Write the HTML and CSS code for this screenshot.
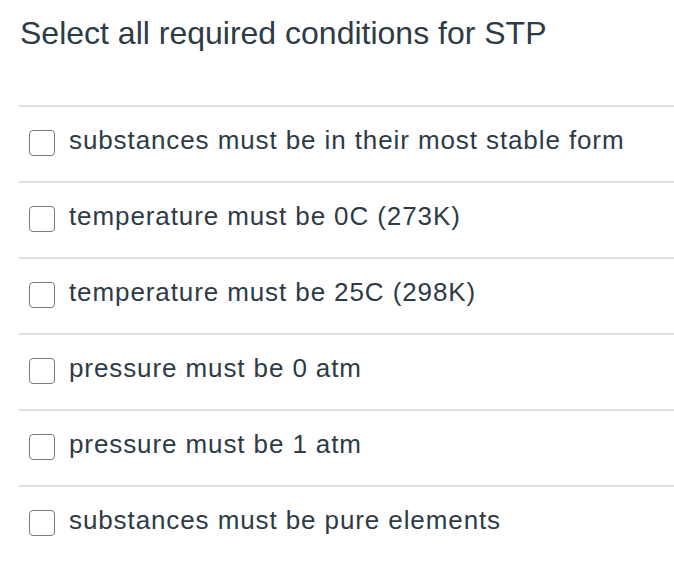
FILE: index.html
```html
<!DOCTYPE html>
<html>
<head>
<meta charset="utf-8">
<link rel="stylesheet" href="styles.css">
</head>
<body>
<div class="quiz">
  <h1 class="question">Select all required conditions for STP</h1>
  <ul class="answers">
    <li class="answer"><span class="box"></span><span class="label">substances must be in their most stable form</span></li>
    <li class="answer"><span class="box"></span><span class="label">temperature must be 0C (273K)</span></li>
    <li class="answer"><span class="box"></span><span class="label">temperature must be 25C (298K)</span></li>
    <li class="answer"><span class="box"></span><span class="label">pressure must be 0 atm</span></li>
    <li class="answer"><span class="box"></span><span class="label">pressure must be 1 atm</span></li>
    <li class="answer"><span class="box"></span><span class="label">substances must be pure elements</span></li>
  </ul>
</div>
</body>
</html>
```
FILE: styles.css
```css
html, body {
  margin: 0;
  padding: 0;
  background: #fff;
}
body {
  font-family: "Liberation Sans", Arial, sans-serif;
  color: #2d3b45;
}
.quiz {
  padding-left: 19px;
}
.question {
  margin: 0;
  padding-top: 14px;
  padding-left: 1px;
  font-size: 32px;
  font-weight: normal;
  line-height: 38px;
  height: 91px;
}
.answers {
  list-style: none;
  margin: 0;
  padding: 0;
}
.answer {
  display: flex;
  align-items: center;
  height: 74px;
  border-top: 2px solid #dedede;
  padding-left: 10px;
}
.box {
  width: 24px;
  height: 24px;
  border: 1px solid #7a7a7a;
  border-radius: 4px;
  flex: none;
  margin-right: 14px;
  margin-bottom: 2px;
}
.label {
  font-size: 26px;
  letter-spacing: 0.9px;
  margin-bottom: 8px;
}
```
